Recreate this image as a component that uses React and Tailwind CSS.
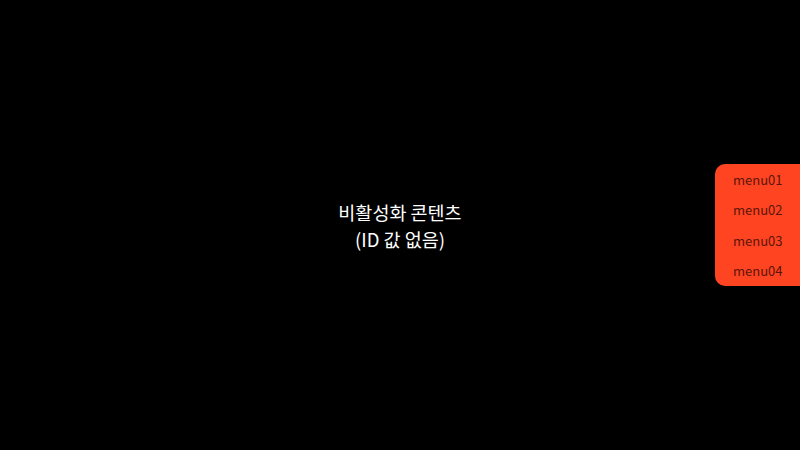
import React from 'react';

const menus = ['menu01', 'menu02', 'menu03', 'menu04'];

const App = () => {
  return (
    <div
      className="relative w-full h-[450px] bg-black flex items-center justify-center"
      style={{ fontFamily: '"Noto Sans CJK KR", "Noto Sans", sans-serif' }}
    >
      <p className="text-white text-[18.5px] leading-[27px] text-center mt-[1px]">
        비활성화 콘텐츠
        <br />
        (ID 값 없음)
      </p>

      <ul className="absolute right-0 top-[164px] w-[85px] bg-[#ff4422] rounded-l-[10px]">
        {menus.map((m) => (
          <li key={m} className="h-[30.5px] flex items-center pl-[18px] text-[13px] text-[#5a1508]">
            {m}
          </li>
        ))}
      </ul>
    </div>
  );
};

export default App;
